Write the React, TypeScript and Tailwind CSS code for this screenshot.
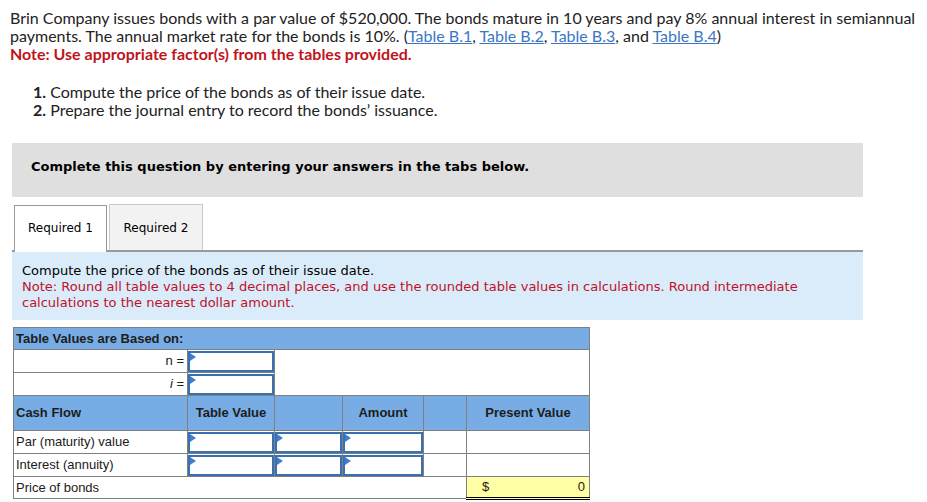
import React from "react";

const Marker = () => (
  <svg className="absolute left-0 top-0" width="6" height="8" viewBox="0 0 6 8">
    <polygon points="0,0 6,4 0,8" fill="#3d7fd6" />
  </svg>
);

const Input = ({ w }: { w: string }) => (
  <div className={`relative h-[21px] ${w} border-2 border-[#3a6fb0] bg-white`}>
    <Marker />
  </div>
);

export default function App() {
  const td = "border border-[#808080] p-0";
  return (
    <div className="w-[927px] h-[502px] bg-white overflow-hidden">
      <div className="pl-[10px] pt-[9px] text-[16px] leading-[18px] text-[#222] font-['Lato',sans-serif]">
        <p>
          Brin Company issues bonds with a par value of $520,000. The bonds mature in 10 years and pay 8% annual interest in semiannual
          payments. The annual market rate for the bonds is 10%. (<span className="text-[#3a76c4] underline">Table B.1</span>,{" "}
          <span className="text-[#3a76c4] underline">Table B.2</span>,{" "}
          <span className="text-[#3a76c4] underline">Table B.3</span>, and{" "}
          <span className="text-[#3a76c4] underline">Table B.4</span>)
        </p>
        <p className="font-bold text-[#c0141c]">Note: Use appropriate factor(s) from the tables provided.</p>
        <div className="pl-[23px] pt-[20px]">
          <p><span className="font-bold">1.</span> Compute the price of the bonds as of their issue date.</p>
          <p><span className="font-bold">2.</span> Prepare the journal entry to record the bonds’ issuance.</p>
        </div>
      </div>

      <div className="ml-[12px] mt-[24px] w-[851px] h-[54px] bg-[#dfdfdf] pt-[14px] pl-[19px] font-['DejaVu_Sans',sans-serif] text-[13px] font-bold text-black">
        Complete this question by entering your answers in the tabs below.
      </div>

      <div className="ml-[12px] mt-[7px] w-[851px] font-['DejaVu_Sans',sans-serif]">
        <div className="flex items-end gap-[2px] pl-[2px] border-b-2 border-[#999]">
          <div className="w-[93px] h-[47px] -mb-[2px] border border-[#999] border-b-0 bg-white flex items-center justify-center text-[12px] text-black pb-[2px]">
            Required 1
          </div>
          <div className="w-[94px] h-[46px] border border-[#c8c8c8] border-b-0 bg-[#f2f2f2] flex items-center justify-center text-[12px] text-black">
            Required 2
          </div>
        </div>
        <div className="bg-[#daecf9] h-[68px] pl-[10px] pt-[11px] text-[13px] leading-[16px]">
          <p className="text-black">Compute the price of the bonds as of their issue date.</p>
          <p className="text-[#c0102a]">
            Note: Round all table values to 4 decimal places, and use the rounded table values in calculations. Round intermediate
            calculations to the nearest dollar amount.
          </p>
        </div>
      </div>

      <table className="ml-[13px] mt-[7px] border-collapse font-['Liberation_Sans',sans-serif] text-[13px] text-[#1a1a1a]">
        <colgroup>
          <col className="w-[174px]" />
          <col className="w-[87px]" />
          <col className="w-[68px]" />
          <col className="w-[81px]" />
          <col className="w-[43px]" />
          <col className="w-[123px]" />
        </colgroup>
        <tbody>
          <tr className="h-[22px] bg-[#78ace4]">
            <td colSpan={6} className={`${td} pl-[2px] font-bold text-[#1d1d1d]`}>Table Values are Based on:</td>
          </tr>
          <tr className="h-[23px]">
            <td className={`${td} text-right pr-[3px]`}>n =</td>
            <td className={td}><Input w="w-full" /></td>
            <td colSpan={4} rowSpan={2} className={td}></td>
          </tr>
          <tr className="h-[23px]">
            <td className={`${td} text-right pr-[3px]`}><i>i</i> =</td>
            <td className={td}><Input w="w-full" /></td>
          </tr>
          <tr className="h-[35px] bg-[#78ace4] font-bold text-[#1d1d1d]">
            <td className={`${td} pl-[2px]`}>Cash Flow</td>
            <td className={`${td} text-center`}>Table Value</td>
            <td className={td}></td>
            <td className={`${td} text-center`}>Amount</td>
            <td className={td}></td>
            <td className={`${td} text-center`}>Present Value</td>
          </tr>
          <tr className="h-[23px]">
            <td className={`${td} pl-[2px]`}>Par (maturity) value</td>
            <td className={td}><Input w="w-full" /></td>
            <td className={td}><Input w="w-full" /></td>
            <td className={td}><Input w="w-full" /></td>
            <td className={td}></td>
            <td className={td}></td>
          </tr>
          <tr className="h-[23px]">
            <td className={`${td} pl-[2px]`}>Interest (annuity)</td>
            <td className={td}><Input w="w-full" /></td>
            <td className={td}><Input w="w-full" /></td>
            <td className={td}><Input w="w-full" /></td>
            <td className={td}></td>
            <td className={td}></td>
          </tr>
          <tr className="h-[22px]">
            <td colSpan={5} className={`${td} pl-[2px]`}>Price of bonds</td>
            <td className="border border-[#808080] border-b-[3px] border-b-black border-double p-0 bg-[#ffffa6]">
              <div className="flex justify-between px-[15px] pr-[4px]">
                <span>$</span>
                <span>0</span>
              </div>
            </td>
          </tr>
        </tbody>
      </table>
    </div>
  );
}
